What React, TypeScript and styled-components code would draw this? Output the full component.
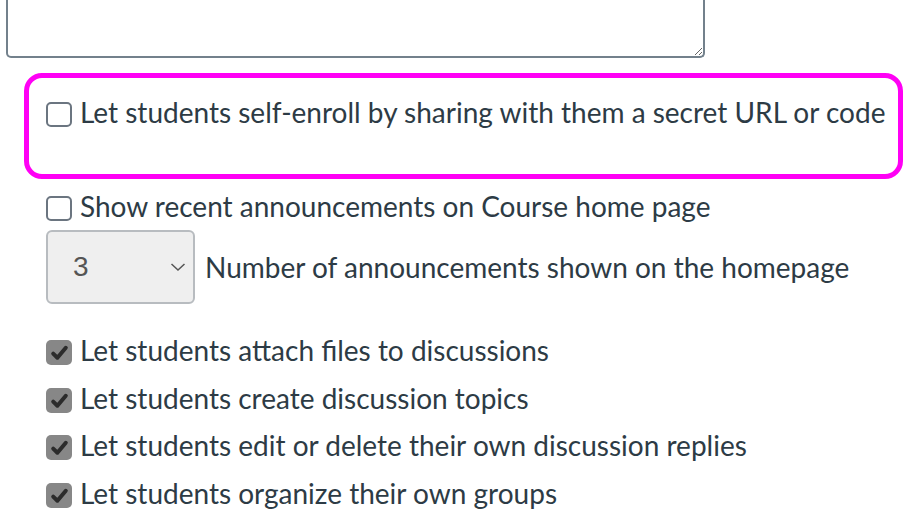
import React from "react";
import styled, { createGlobalStyle } from "styled-components";

const GlobalStyle = createGlobalStyle`
  html, body {
    margin: 0;
    padding: 0;
    background: #ffffff;
    overflow: hidden;
  }
  body {
    font-family: Lato, "Open Sans", sans-serif;
    color: #2d3b45;
  }
`;

const Page = styled.div`
  width: 921px;
  height: 518px;
  display: flex;
  flex-direction: column;
  align-items: flex-start;
`;

const Description = styled.textarea`
  display: block;
  box-sizing: border-box;
  margin: 0 0 0 6px;
  width: 699px;
  height: 58px;
  border: 2px solid #73818c;
  border-top: none;
  border-radius: 0 0 5px 5px;
  resize: both;
  outline: none;
  font: inherit;
`;

const Highlight = styled.div`
  box-sizing: border-box;
  margin: 15px 0 0 24px;
  width: 879px;
  height: 106px;
  border: 5px solid #ff00f5;
  border-radius: 18px;
  padding: 24px 0 0 17px;
`;

const Options = styled.div`
  display: flex;
  flex-direction: column;
  align-items: flex-start;
  margin: 17px 0 0 46px;
`;

const Row = styled.label<{ $top?: number }>`
  display: flex;
  align-items: center;
  gap: 8px;
  height: 25px;
  margin-top: ${(p) => p.$top ?? 0}px;
  font-size: 28px;
  line-height: 25px;
  color: #2d3b45;
  white-space: nowrap;
`;

const Label = styled.span`
  position: relative;
  top: -2px;
`;

const Box = styled.span<{ $checked?: boolean }>`
  box-sizing: border-box;
  flex: none;
  width: 26px;
  height: 25px;
  border-radius: 5px;
  display: flex;
  align-items: center;
  justify-content: center;
  border: ${(p) => (p.$checked ? "none" : "2px solid #6b7580")};
  background: ${(p) => (p.$checked ? "#878787" : "#ffffff")};
`;

const SelectRow = styled.div`
  display: flex;
  align-items: center;
  gap: 10px;
  margin-top: 9px;
  font-size: 28px;
  color: #2d3b45;
  white-space: nowrap;
`;

const Select = styled.div`
  box-sizing: border-box;
  width: 149px;
  height: 74px;
  border: 2px solid #b8bcc0;
  border-radius: 6px;
  background: #efefef;
  display: flex;
  align-items: center;
  justify-content: space-between;
  padding: 0 7px 0 25px;
  font-family: "Liberation Sans", Arial, sans-serif;
  font-size: 28px;
  color: #555555;
`;

const Check = () => (
  <svg width="21" height="21" viewBox="0 0 20 20">
    <path
      d="M4 11 L8 15 L16 5.5"
      fill="none"
      stroke="#2b2b2b"
      strokeWidth="3.8"
      strokeLinecap="round"
      strokeLinejoin="round"
    />
  </svg>
);

const Chevron = () => (
  <svg width="16" height="10" viewBox="0 0 16 10">
    <path d="M1.5 2 L8 8 L14.5 2" fill="none" stroke="#555" strokeWidth="1.5" />
  </svg>
);

const checked = [
  "Let students attach files to discussions",
  "Let students create discussion topics",
  "Let students edit or delete their own discussion replies",
  "Let students organize their own groups",
];

export default function App() {
  return (
    <>
      <GlobalStyle />
      <Page>
        <Description />
        <Highlight>
          <Row>
            <Box />
            <Label>Let students self-enroll by sharing with them a secret URL or code</Label>
          </Row>
        </Highlight>
        <Options>
          <Row>
            <Box />
            <Label>Show recent announcements on Course home page</Label>
          </Row>
          <SelectRow>
            <Select>
              <span>3</span>
              <Chevron />
            </Select>
            Number of announcements shown on the homepage
          </SelectRow>
          {checked.map((t, i) => (
            <Row key={t} $top={i === 0 ? 36 : 22.6}>
              <Box $checked>
                <Check />
              </Box>
              <Label>{t}</Label>
            </Row>
          ))}
        </Options>
      </Page>
    </>
  );
}
